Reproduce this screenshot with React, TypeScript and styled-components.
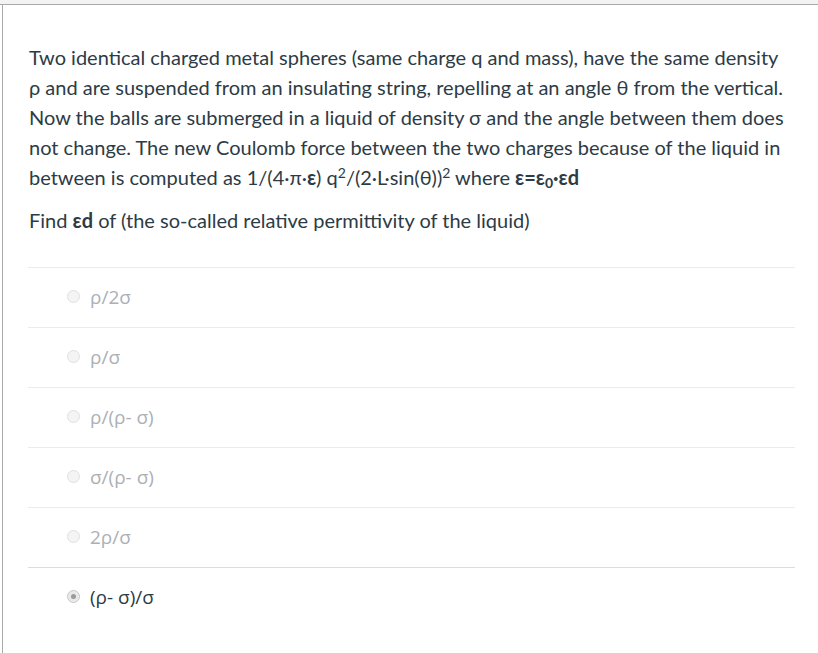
import React from "react";
import styled, { createGlobalStyle } from "styled-components";

const Global = createGlobalStyle`
  html, body { margin: 0; padding: 0; background: #fff; }
  body { font-family: Lato, "Open Sans", sans-serif; }
`;

const TopStrip = styled.div`
  height: 4px;
  background: #f3f3f3;
  border-bottom: 1px solid #a9a9a9;
`;

const Frame = styled.div`
  margin-left: 2px;
  border-left: 1px solid #a9a9a9;
  min-height: 648px;
  box-sizing: border-box;
  padding: 37px 23px 0 25px;
`;

const Question = styled.div`
  font-family: Lato, sans-serif;
  font-size: 20px;
  line-height: 30px;
  color: #2d3b45;
  padding-left: 1px;
  white-space: nowrap;
`;

const Para = styled.p<{ $gap?: number }>`
  margin: 0 0 ${(p) => p.$gap ?? 0}px 0;
`;

const Sup = styled.sup`
  font-size: 14px;
  line-height: 0;
  vertical-align: 7px;
`;

const Sub = styled.span`
  font-size: 14px;
  line-height: 0;
  vertical-align: -3px;
`;

const Answers = styled.div`
  margin-top: 32px;
`;

const Row = styled.label<{ $last?: boolean }>`
  display: flex;
  align-items: center;
  height: 60px;
  box-sizing: border-box;
  border-top: 1px solid ${(p) => (p.$last ? "#dcdcdc" : "#ebebeb")};
  padding-left: 39px;
  padding-bottom: 2px;
  gap: 10px;
`;

const Radio = styled.span<{ $checked?: boolean }>`
  width: 13px;
  height: 13px;
  border-radius: 50%;
  box-sizing: border-box;
  border: 1px solid ${(p) => (p.$checked ? "#c8c8c8" : "#e0e0e0")};
  background: ${(p) => (p.$checked ? "#e9e9e9" : "#f4f4f4")};
  display: flex;
  align-items: center;
  justify-content: center;
  &::after {
    content: "";
    display: ${(p) => (p.$checked ? "block" : "none")};
    width: 5px;
    height: 5px;
    border-radius: 50%;
    background: #9a9a9a;
  }
`;

const AnswerText = styled.span<{ $checked?: boolean }>`
  font-family: "Open Sans", sans-serif;
  font-size: 19px;
  font-weight: 400;
  color: ${(p) => (p.$checked ? "#2d3b45" : "#abb0b5")};
`;

const answers = ["ρ/2σ", "ρ/σ", "ρ/(ρ- σ)", "σ/(ρ- σ)", "2ρ/σ", "(ρ- σ)/σ"];

export default function App() {
  return (
    <>
      <Global />
      <TopStrip />
      <Frame>
        <Question>
          <Para $gap={13}>
            Two identical charged metal spheres (same charge q and mass), have the same density
            <br />
            ρ and are suspended from an insulating string, repelling at an angle θ from the vertical.
            <br />
            Now the balls are submerged in a liquid of density σ and the angle between them does
            <br />
            not change. The new Coulomb force between the two charges because of the liquid in
            <br />
            between is computed as 1/(4·π·<b>ε</b>) q<Sup>2</Sup>/(2·L·sin(θ))<Sup>2</Sup> where{" "}
            <b>
              ε=ε<Sub>0</Sub>·εd
            </b>
          </Para>
          <Para>
            Find <b>εd</b> of (the so-called relative permittivity of the liquid)
          </Para>
        </Question>
        <Answers>
          {answers.map((a, i) => {
            const checked = i === answers.length - 1;
            return (
              <Row key={a} $last={checked}>
                <Radio $checked={checked} />
                <AnswerText $checked={checked}>{a}</AnswerText>
              </Row>
            );
          })}
        </Answers>
      </Frame>
    </>
  );
}
